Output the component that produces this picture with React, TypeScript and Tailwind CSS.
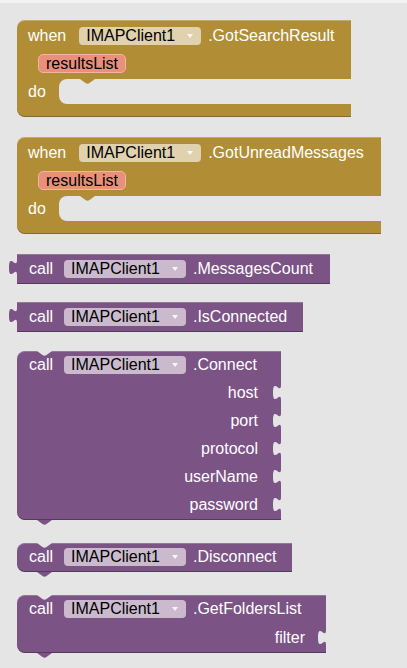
import React from 'react';

const GOLD = '#b18e35';
const PURPLE = '#7c5385';
const BG = '#e5e5e5';

const font = { fontFamily: '"Liberation Sans", Arial, sans-serif' };

const Dropdown = ({ gold }: { gold?: boolean }) => (
  <div
    className={`flex h-[18px] shrink-0 items-center rounded-[4px] pl-[7px] pr-[8px] ${
      gold ? 'bg-[#e0d2ae]' : 'bg-[#cbbace]'
    }`}
  >
    <span className="text-[16px] leading-none text-black">IMAPClient1</span>
    <svg width="6" height="4" viewBox="0 0 6 4" className="ml-[12px] block">
      <path d="M0 0h6L3 4z" fill="#ffffff" fillOpacity={0.85} />
    </svg>
  </div>
);

// output tab on the left of a value block
const OutputTab = () => (
  <svg width="9" height="25" viewBox="0 0 9 25" className="absolute -left-[8px] top-[1px] block">
    <path d="M9 5 L8 5 C8 15 0 -3 0 12.5 C0 28 8 10 8 20 L9 20 Z" fill={PURPLE} />
  </svg>
);

// socket cut into the right edge for a value input
const InputSocket = () => (
  <svg width="9" height="25" viewBox="0 0 9 25" className="absolute right-0 top-[1px] block">
    <path d="M9 5 L8 5 C8 15 0 -3 0 12.5 C0 28 8 10 8 20 L9 20 Z" transform="translate(1 0)" fill={BG} />
  </svg>
);

// notch / tab used by statement connections
const Notch = ({ color, className }: { color: string; className: string }) => (
  <svg width="15" height="5" viewBox="0 0 15 5" className={`absolute block ${className}`}>
    <path d="M0 0 L5.5 4 Q7.5 5.4 9.5 4 L15 0 Z" fill={color} />
  </svg>
);

const EventBlock = ({ event, width, className }: { event: string; width: string; className: string }) => (
  <div className={`flex flex-col ${width} ${className}`}>
    <div className="flex flex-col rounded-tl-[8px] bg-[#b18e35] pb-[6px] pt-[7px] shadow-[inset_0_1px_0_rgba(255,255,255,0.25)]">
      <div className="flex h-[18px] items-center pl-[11px] text-[16px] leading-none text-white">
        <span>when</span>
        <div className="ml-[13px]">
          <Dropdown gold />
        </div>
        <span className="ml-[7px]">{event}</span>
      </div>
      <div className="mt-[9px] flex pl-[21px]">
        <div className="flex h-[19px] items-center rounded-[5px] border border-[#f0b4a1] bg-[#e8907a] px-[7px] text-[16px] leading-none text-black">
          resultsList
        </div>
      </div>
    </div>
    <div className="flex h-[25px] bg-[#b18e35]">
      <div className="flex w-[42px] items-center pl-[11px] text-[16px] leading-none text-white">do</div>
      <div className="relative flex-1 rounded-l-[8px] bg-[#e5e5e5]">
        <Notch color={GOLD} className="left-[21px] top-0" />
      </div>
    </div>
    <div className="h-[13px] rounded-bl-[8px] bg-[#b18e35] shadow-[inset_0_-1px_0_rgba(0,0,0,0.25)]" />
  </div>
);

const CallHead = ({ method }: { method: string }) => (
  <div className="flex h-[28px] items-center pl-[12px] text-[16px] leading-none text-white">
    <span>call</span>
    <div className="ml-[11px]">
      <Dropdown />
    </div>
    <span className="ml-[7px]">{method}</span>
  </div>
);

const ValueBlock = ({ method, width, className }: { method: string; width: string; className: string }) => (
  <div
    className={`relative flex h-[30px] items-center bg-[#7c5385] shadow-[inset_0_1px_0_rgba(255,255,255,0.2),inset_0_-1px_0_rgba(0,0,0,0.3)] ${width} ${className}`}
  >
    <OutputTab />
    <CallHead method={method} />
  </div>
);

const StatementBlock = ({
  method,
  inputs = [],
  width,
  className,
  pr,
  last,
}: {
  method: string;
  inputs?: string[];
  width: string;
  className: string;
  pr?: string;
  last?: string;
}) => (
  <div
    className={`relative flex flex-col rounded-l-[8px] bg-[#7c5385] pb-[1px] shadow-[inset_0_1px_0_rgba(255,255,255,0.2),inset_0_-1px_0_rgba(0,0,0,0.3)] ${width} ${className}`}
  >
    <Notch color={BG} className="left-[20px] top-0" />
    <CallHead method={method} />
    {inputs.map((label) => (
      <div
        key={label}
        className={`relative flex h-[28px] items-center justify-end text-[16px] leading-none text-white ${pr} ${
          label === last ? 'mt-[1px]' : ''
        }`}
      >
        <span>{label}</span>
        <InputSocket />
      </div>
    ))}
    <Notch color={PURPLE} className="-bottom-[5px] left-[20px]" />
  </div>
);

export default function App() {
  return (
    <div className="min-h-screen w-full border-t-[3px] border-[#f3f3f3] bg-[#e5e5e5]" style={font}>
      <div className="flex flex-col items-start pb-[20px] pl-[17px]">
        <EventBlock event=".GotSearchResult" width="w-[334px]" className="mt-[17px]" />
        <EventBlock event=".GotUnreadMessages" width="w-[364px]" className="mt-[20px]" />
        <ValueBlock method=".MessagesCount" width="w-[313px]" className="mt-[20px]" />
        <ValueBlock method=".IsConnected" width="w-[286px]" className="mt-[18px]" />
        <StatementBlock
          method=".Connect"
          inputs={['host', 'port', 'protocol', 'userName', 'password']}
          width="w-[264px]"
          className="mt-[19px]"
          pr="pr-[23px]"
        />
        <StatementBlock method=".Disconnect" width="w-[275px]" className="mt-[23px]" />
        <StatementBlock
          method=".GetFoldersList"
          inputs={['filter']}
          width="w-[309px]"
          className="mt-[23px]"
          pr="pr-[21px]"
          last="filter"
        />
      </div>
    </div>
  );
}
